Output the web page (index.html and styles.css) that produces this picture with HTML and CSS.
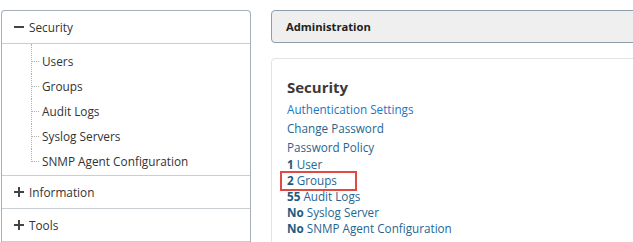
FILE: index.html
```html
<!DOCTYPE html>
<html>
<head>
<meta charset="utf-8">
<link rel="stylesheet" href="styles.css">
</head>
<body>
<div class="page">
  <nav class="side">
    <div class="sec-head"><span class="ico minus"></span>Security</div>
    <ul class="tree">
      <li>Users</li>
      <li>Groups</li>
      <li>Audit Logs</li>
      <li>Syslog Servers</li>
      <li>SNMP Agent Configuration</li>
    </ul>
    <div class="sec-head bordered"><span class="ico plus"></span>Information</div>
    <div class="sec-head bordered"><span class="ico plus"></span>Tools</div>
  </nav>
  <main class="main">
    <div class="titlebar">Administration</div>
    <div class="card">
      <h2 class="card-title">Security</h2>
      <ul class="links">
        <li class="tall"><a class="lnk first">Authentication Settings</a></li>
        <li class="tall"><a class="lnk">Change Password</a></li>
        <li class="tall short"><a class="lnk">Password Policy</a></li>
        <li><a class="lnk"><b>1</b> User</a></li>
        <li class="hl"><a class="lnk"><b>2</b> Groups</a></li>
        <li><a class="lnk"><b>55</b> Audit Logs</a></li>
        <li><a class="lnk"><b>No</b> Syslog Server</a></li>
        <li><a class="lnk"><b>No</b> SNMP Agent Configuration</a></li>
      </ul>
    </div>
  </main>
</div>
</body>
</html>
```
FILE: styles.css
```css
html, body {
  margin: 0;
  padding: 0;
  background: #ffffff;
  overflow: hidden;
}
body {
  font-family: "Open Sans", "Noto Sans", sans-serif;
  font-size: 12px;
  color: #333333;
}
.page {
  display: flex;
  align-items: flex-start;
  gap: 20px;
  padding: 10px 0 0 1px;
  width: 633px;
  height: 242px;
  box-sizing: border-box;
  overflow: hidden;
}
.side {
  width: 250px;
  flex: none;
  border: 1px solid #a7b0b8;
  border-bottom: none;
  border-radius: 4px 4px 0 0;
  height: 232px;
  box-sizing: border-box;
}
.sec-head {
  height: 32px;
  display: flex;
  align-items: center;
  padding-left: 12px;
  font-size: 11.8px;
  color: #333;
  border-bottom: 1px solid #c9ced2;
}
.sec-head.bordered {
  height: 33px;
  box-sizing: border-box;
}
.ico {
  width: 10px;
  height: 10px;
  margin-right: 5px;
  position: relative;
  flex: none;
}
.ico::before, .ico::after {
  content: "";
  position: absolute;
  background: #444;
}
.ico::before {
  left: 0;
  top: 4px;
  width: 10px;
  height: 2px;
}
.plus::after {
  left: 4px;
  top: 0;
  width: 2px;
  height: 10px;
}
.tree {
  list-style: none;
  margin: 0;
  padding: 5px 0 1px 29px;
  border-bottom: 1px solid #c9ced2;
}
.tree li {
  position: relative;
  height: 25px;
  line-height: 25px;
  padding-left: 11px;
  font-size: 11.8px;
  color: #333;
}
.tree li::before {
  content: "";
  position: absolute;
  left: 0;
  top: -5px;
  height: 30px;
  border-left: 1px dotted #b0b0b0;
}
.tree li + li::before {
  top: 0;
  height: 25px;
}
.tree li:last-child::before {
  height: 13px;
}
.tree li::after {
  content: "";
  position: absolute;
  left: 1px;
  top: 12px;
  width: 7px;
  border-top: 1px dotted #b0b0b0;
}
.main {
  flex: none;
  width: 368px;
}
.titlebar {
  height: 31px;
  border: 1px solid #8e9ea9;
  border-radius: 4px;
  background: #efefef;
  display: flex;
  align-items: center;
  padding-left: 14px;
  font-weight: bold;
  font-size: 11.2px;
  color: #222;
}
.card {
  margin-top: 15px;
  border: 1px solid #e3e3e3;
  border-radius: 4px;
  padding: 17px 15px 10px;
  height: 180px;
}
.card-title {
  margin: 0 0 2px;
  font-size: 15px;
  font-weight: bold;
  color: #3a3a3a;
  line-height: 22px;
}
.links {
  list-style: none;
  margin: 0;
  padding: 0;
}
.links li {
  line-height: 16px;
  height: 16px;
}
.links li.tall {
  height: 19px;
  line-height: 19px;
}
.links li.tall.short {
  height: 18px;
  line-height: 18px;
}
.links li.hl {
  position: relative;
}
.links li.hl::after {
  content: "";
  position: absolute;
  left: -7px;
  top: -1px;
  width: 73px;
  height: 16px;
  border: 2px solid #e04a43;
}
.lnk {
  color: #1f6690;
  font-size: 11.7px;
}
.lnk.first {
  color: #1a76c6;
}
.lnk b {
  font-weight: bold;
  color: #1d5a7d;
}
```
